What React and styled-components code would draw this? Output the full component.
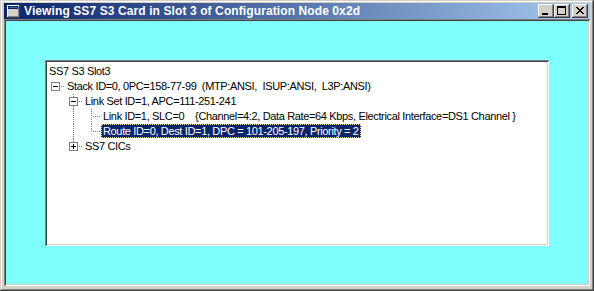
import React from "react";
import styled, { createGlobalStyle } from "styled-components";

const Global = createGlobalStyle`
  html, body { margin: 0; padding: 0; background: #d4d0c8; overflow: hidden; }
  * { box-sizing: border-box; }
`;

const Window = styled.div`
  width: 594px;
  height: 291px;
  display: flex;
  flex-direction: column;
  background: #d4d0c8;
  padding: 3px 4px 5px 4px;
  box-shadow: inset -1px -1px #404040, inset 1px 1px #d4d0c8,
    inset -2px -2px #808080, inset 2px 2px #ffffff;
`;

const TitleBar = styled.div`
  height: 16px;
  flex: none;
  display: flex;
  align-items: center;
  background: linear-gradient(to right, #0a246a, #a6caf0);
`;

const TitleIcon = styled.svg`
  margin-left: 3px;
  flex: none;
`;

const TitleText = styled.span`
  margin-left: 4px;
  color: #ffffff;
  font-family: "Liberation Sans", Arial, sans-serif;
  font-weight: bold;
  font-size: 12px;
  letter-spacing: 0.1px;
  white-space: pre;
  line-height: 16px;
`;

const Controls = styled.div`
  margin-left: auto;
  margin-right: 2px;
  display: flex;
  align-items: center;
`;

const CapButton = styled.div`
  width: 16px;
  height: 14px;
  background: #d4d0c8;
  margin-left: ${(p) => (p.$gap ? "2px" : "0")};
  box-shadow: inset -1px -1px #404040, inset 1px 1px #ffffff,
    inset -2px -2px #808080, inset 2px 2px #d4d0c8;
  display: flex;
`;

const ClientEdge = styled.div`
  flex: 1;
  display: flex;
  padding: 2px;
  box-shadow: inset 1px 1px #808080, inset -1px -1px #ffffff,
    inset 2px 2px #404040, inset -2px -2px #d4d0c8;
`;

const Client = styled.div`
  flex: 1;
  display: flex;
  background: #80ffff;
  padding: 39px 39px 38px 39px;
`;

const TreeBox = styled.div`
  flex: 1;
  background: #ffffff;
  padding: 4px 2px 2px 2px;
  box-shadow: inset 1px 1px #808080, inset -1px -1px #ffffff,
    inset 2px 2px #404040, inset -2px -2px #d4d0c8;
  font-family: "Liberation Sans", Arial, sans-serif;
  font-size: 11px;
  letter-spacing: -0.35px;
  color: #000000;
`;

const Row = styled.div`
  height: 15px;
  display: flex;
  align-items: flex-start;
`;

const Label = styled.span`
  height: 14px;
  line-height: 14px;
  padding: 0 2px;
  white-space: pre;
  background: ${(p) => (p.$selected ? "#0a246a" : "transparent")};
  color: ${(p) => (p.$selected ? "#ffffff" : "#000000")};
  outline: ${(p) => (p.$selected ? "1px dotted #f5db95" : "none")};
  outline-offset: -1px;
`;

const Cell = styled.svg`
  flex: none;
  display: block;
`;

const DOT = "#808080";
const W = 18;
const CX = 8;

function Guide({ line }) {
  const dots = [];
  if (line) {
    for (let y = 0; y < 15; y += 2) dots.push(<rect key={y} x={CX} y={y} width={1} height={1} fill={DOT} />);
  }
  return (
    <Cell width={W} height={15} viewBox={`0 0 ${W} 15`}>
      {dots}
    </Cell>
  );
}

function Connector({ top, bottom, box }) {
  const dots = [];
  if (top) for (let y = 0; y <= 7; y += 2) dots.push(<rect key={"t" + y} x={CX} y={y} width={1} height={1} fill={DOT} />);
  if (bottom) for (let y = 8; y < 15; y += 2) dots.push(<rect key={"b" + y} x={CX} y={y} width={1} height={1} fill={DOT} />);
  for (let x = CX + 2; x < W; x += 2) dots.push(<rect key={"h" + x} x={x} y={7} width={1} height={1} fill={DOT} />);
  return (
    <Cell width={W} height={15} viewBox={`0 0 ${W} 15`}>
      {dots}
      {box && (
        <g>
          <rect x={CX - 3.5} y={3.5} width={8} height={8} fill="#ffffff" stroke={DOT} strokeWidth={1} />
          <rect x={CX - 2} y={7} width={5} height={1} fill="#000000" />
          {box === "plus" && <rect x={CX} y={5} width={1} height={5} fill="#000000" />}
        </g>
      )}
    </Cell>
  );
}

function CloseGlyph() {
  const rows = [
    [0, 1, 6, 7],
    [1, 2, 5, 6],
    [2, 3, 4, 5],
    [3, 4],
    [2, 3, 4, 5],
    [1, 2, 5, 6],
    [0, 1, 6, 7],
  ];
  return (
    <svg width={16} height={14} viewBox="0 0 16 14">
      {rows.map((cols, r) =>
        cols.map((c) => <rect key={r + "-" + c} x={4 + c} y={3 + r} width={1} height={1} fill="#000" />)
      )}
    </svg>
  );
}

export default function App() {
  return (
    <>
      <Global />
      <Window>
        <TitleBar>
          <TitleIcon width={13} height={13} viewBox="0 0 13 13">
            <rect x={0} y={0} width={13} height={13} fill="#404040" />
            <rect x={0} y={0} width={12} height={12} fill="#ffffff" />
            <rect x={1} y={1} width={11} height={11} fill="#808080" />
            <rect x={1} y={1} width={10} height={10} fill="#d4d0c8" />
            <rect x={1} y={1} width={10} height={3} fill="#0a246a" />
            <rect x={2} y={2} width={8} height={1} fill="#3a6ea5" />
          </TitleIcon>
          <TitleText>Viewing SS7 S3 Card in Slot 3 of Configuration Node 0x2d</TitleText>
          <Controls>
            <CapButton>
              <svg width={16} height={14} viewBox="0 0 16 14">
                <rect x={4} y={9} width={6} height={2} fill="#000" />
              </svg>
            </CapButton>
            <CapButton>
              <svg width={16} height={14} viewBox="0 0 16 14">
                <rect x={3} y={2} width={9} height={2} fill="#000" />
                <rect x={3} y={2} width={1} height={9} fill="#000" />
                <rect x={11} y={2} width={1} height={9} fill="#000" />
                <rect x={3} y={10} width={9} height={1} fill="#000" />
              </svg>
            </CapButton>
            <CapButton $gap>
              <CloseGlyph />
            </CapButton>
          </Controls>
        </TitleBar>
        <ClientEdge>
          <Client>
            <TreeBox>
              <Row>
                <Label>SS7 S3 Slot3</Label>
              </Row>
              <Row>
                <Connector box="minus" />
                <Label>{"Stack ID=0, 0PC=158-77-99  (MTP:ANSI,  ISUP:ANSI,  L3P:ANSI)"}</Label>
              </Row>
              <Row>
                <Guide />
                <Connector top bottom box="minus" />
                <Label>Link Set ID=1, APC=111-251-241</Label>
              </Row>
              <Row>
                <Guide />
                <Guide line />
                <Connector top bottom />
                <Label>{"Link ID=1, SLC=0    {Channel=4:2, Data Rate=64 Kbps, Electrical Interface=DS1 Channel }"}</Label>
              </Row>
              <Row>
                <Guide />
                <Guide line />
                <Connector top />
                <Label $selected>Route ID=0, Dest ID=1, DPC = 101-205-197, Priority = 2</Label>
              </Row>
              <Row>
                <Guide />
                <Connector top box="plus" />
                <Label>SS7 CICs</Label>
              </Row>
            </TreeBox>
          </Client>
        </ClientEdge>
      </Window>
    </>
  );
}
